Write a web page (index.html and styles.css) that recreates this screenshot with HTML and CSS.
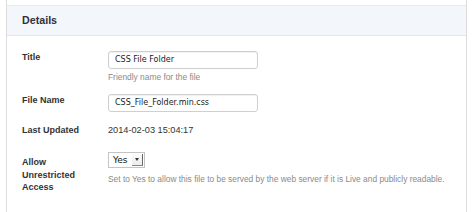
FILE: index.html
```html
<!DOCTYPE html>
<html lang="en">
<head>
    <meta charset="UTF-8">
    <title>Details</title>
    <link rel="stylesheet" href="styles.css">
</head>
<body>
    <div class="panel">
        <div class="panel-header">Details</div>

        <div class="form">
            <div class="row">
                <div class="label">Title</div>
                <div class="field">
                    <div class="input">CSS File Folder</div>
                    <div class="hint">Friendly name for the file</div>
                </div>
            </div>

            <div class="row">
                <div class="label">File Name</div>
                <div class="field">
                    <div class="input">CSS_File_Folder.min.css</div>
                </div>
            </div>

            <div class="row row-text">
                <div class="label">Last Updated</div>
                <div class="field value">2014-02-03 15:04:17</div>
            </div>

            <div class="row">
                <div class="label label-multi">Allow<br>Unrestricted<br>Access</div>
                <div class="field">
                    <div class="select">
                        <span class="select-value">Yes</span>
                        <span class="select-arrow"></span>
                    </div>
                    <div class="hint hint-select">Set to Yes to allow this file to be served by the web server if it is Live and publicly readable.</div>
                </div>
            </div>
        </div>
    </div>
</body>
</html>
```

FILE: styles.css
```css
body {
    margin: 0;
    background: #fff;
    font-family: "Liberation Sans", Arial, sans-serif;
    color: #333;
}

.panel {
    margin-left: 6px;
    width: 461px;
    height: 212px;
    border-left: 1px solid #dcdcdc;
    border-right: 1px solid #dcdcdc;
    box-sizing: border-box;
    padding-top: 5px;
}

.panel-header {
    height: 29px;
    line-height: 29px;
    background: #f3f6fb;
    border-top: 1px solid #e6e9ef;
    border-bottom: 1px solid #e3e7ee;
    padding-left: 15px;
    font-size: 10.7px;
    font-weight: bold;
    color: #2f3238;
}

.form {
    padding: 15px 0 0 15px;
}

.row {
    display: grid;
    grid-template-columns: 86px 1fr;
    margin-bottom: 12px;
}

.row-text {
    margin-bottom: 16px;
}

.label {
    font-size: 9px;
    font-weight: bold;
    line-height: 12px;
    color: #333;
}

.label-multi {
    padding-top: 4px;
    line-height: 12.5px;
}

.input {
    width: 150px;
    height: 18px;
    box-sizing: border-box;
    border: 1px solid #cfcfcf;
    border-radius: 3px;
    box-shadow: inset 0 1px 1px rgba(0,0,0,0.06);
    padding-left: 6px;
    font-family: "DejaVu Sans", Verdana, sans-serif;
    font-size: 8px;
    line-height: 16px;
    color: #222;
}

.hint {
    margin-top: 3px;
    font-size: 8.4px;
    line-height: 10px;
    color: #8a8a8a;
    white-space: nowrap;
}

.hint-select {
    margin-top: 6px;
}

.value {
    font-size: 9.2px;
    line-height: 12px;
    color: #333;
}

.select {
    display: flex;
    align-items: center;
    width: 37px;
    height: 16px;
    box-sizing: border-box;
    border: 1px solid #c4c4c4;
    background: #fff;
    padding: 0 1px 0 4px;
}

.select-value {
    flex: 1;
    font-family: "DejaVu Sans", Verdana, sans-serif;
    font-size: 9px;
    line-height: 14px;
    color: #111;
}

.select-arrow {
    position: relative;
    width: 11px;
    height: 12px;
    box-sizing: border-box;
    background: linear-gradient(#fdfdfd, #ececec);
    border-right: 1px solid #666;
    border-bottom: 1px solid #888;
}

.select-arrow::after {
    content: "";
    position: absolute;
    left: 3px;
    top: 4px;
    border-left: 2px solid transparent;
    border-right: 2px solid transparent;
    border-top: 3px solid #333;
}
```
